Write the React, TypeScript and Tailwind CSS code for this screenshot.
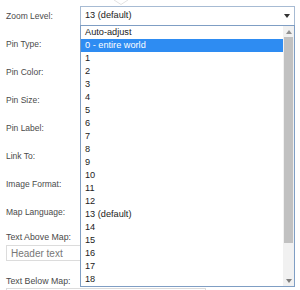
import { Fragment } from 'react'

const labels = ['Zoom Level:', 'Pin Type:', 'Pin Color:', 'Pin Size:', 'Pin Label:', 'Link To:', 'Image Format:', 'Map Language:'];

const zoomOptions = [
    'Auto-adjust', '0 - entire world', '1', '2', '3', '4', '5', '6', '7', '8', '9',
    '10', '11', '12', '13 (default)', '14', '15', '16', '17', '18',
];

function Caret({ up }: { up?: boolean }) {
    return (
        <svg width="6" height="4" viewBox="0 0 6 4" className={up ? 'rotate-180' : ''}>
            <path d="M0 0 L6 0 L3 4 Z" fill="#333" />
        </svg>
    );
}

function ZoomDropdown() {
    return (
        <div className="absolute left-[80px] top-[25px] w-[215px] h-[262px] border border-[#7f9ec4] bg-white flex">
            <div className="flex-1 flex flex-col">
                {zoomOptions.map((opt, i) => (
                    <div key={opt}
                         className={`h-[13px] leading-[13px] pl-[4px] text-[9.2px] whitespace-nowrap ${i === 1 ? 'bg-[#2e8cf2] text-white' : 'text-[#222]'}`}>
                        {opt}
                    </div>
                ))}
            </div>
            <div className="w-[11px] bg-[#f1f1f1] flex flex-col items-center">
                <div className="h-[11px] flex items-center justify-center opacity-50"><Caret up /></div>
                <div className="w-[9px] h-[206px] bg-[#c1c1c1]" />
                <div className="flex-1" />
                <div className="h-[11px] flex items-center justify-center opacity-60"><Caret /></div>
            </div>
        </div>
    );
}

export default function App() {
    return (
        <div className="relative w-[300px] h-[290px] bg-white overflow-hidden font-['Liberation_Sans',Arial,sans-serif]">
            <svg className="absolute left-[114px] top-0" width="14" height="5" viewBox="0 0 14 5">
                <path d="M0 0 L7 4.5 L14 0" fill="none" stroke="#e2e2e2" />
            </svg>

            <div className="pt-[2px] pl-[6px]">
                {labels.map((label, i) => (
                    <div key={label} className="h-[28px] flex items-center">
                        <div className="w-[74px] text-[8.5px] text-[#4a4a4a]">{label}</div>
                        {i === 0 && (
                            <div className="w-[215px] h-[20px] border border-[#a7bbd3] flex items-center justify-between pl-[4px] pr-[4px] text-[9.2px] text-[#222]">
                                <span>13 (default)</span>
                                <Caret />
                            </div>
                        )}
                    </div>
                ))}

                <div className="mt-[5px] h-[12px] leading-[12px] text-[8.8px] text-[#4a4a4a]">Text Above Map:</div>
                <div className="mt-[2px] w-[200px] h-[16px] border border-[#dcdcdc] flex items-center pl-[4px] text-[10px] text-[#777]">
                    Header text
                </div>
                <div className="mt-[14px] h-[12px] leading-[12px] text-[8.8px] text-[#4a4a4a]">Text Below Map:</div>
                <div className="mt-[1px] w-[200px] h-[16px] border border-[#dcdcdc]" />
            </div>

            <ZoomDropdown />
        </div>
    );
}
